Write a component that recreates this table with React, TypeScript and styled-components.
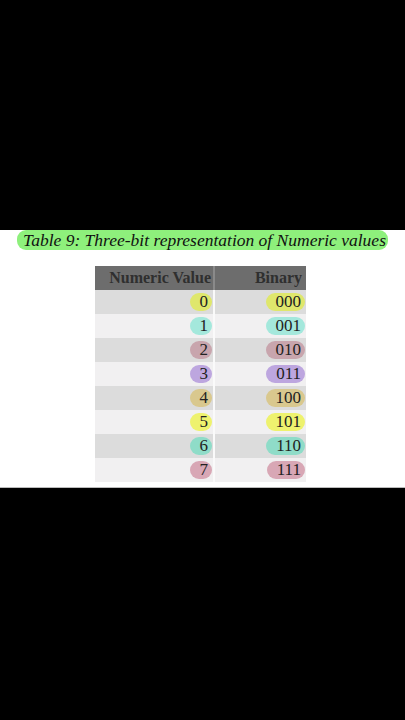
import React from "react"
import styled, { createGlobalStyle } from "styled-components"

const GlobalStyle = createGlobalStyle`
  html, body {
    margin: 0;
    padding: 0;
    background: #000;
  }
  #root {
    width: 405px;
    height: 720px;
  }
`

interface Row {
  value: string
  binary: string
  color: string
}

const rows: Row[] = [
  { value: "0", binary: "000", color: "#dfe76c" },
  { value: "1", binary: "001", color: "#a4e8dc" },
  { value: "2", binary: "010", color: "#c8a5ad" },
  { value: "3", binary: "011", color: "#bda6df" },
  { value: "4", binary: "100", color: "#d9c88e" },
  { value: "5", binary: "101", color: "#eef26e" },
  { value: "6", binary: "110", color: "#8fdcc8" },
  { value: "7", binary: "111", color: "#d8a7b5" },
]

export default function App() {
  return (
    <>
      <GlobalStyle />
      <Screen>
        <Slide>
          <Caption>
            <Mark>Table 9: Three-bit representation of Numeric values</Mark>
          </Caption>
          <Table>
            <colgroup>
              <col style={{ width: 119 }} />
              <col style={{ width: 92 }} />
            </colgroup>
            <thead>
              <tr>
                <HeadCell>Numeric Value</HeadCell>
                <HeadCell>Binary</HeadCell>
              </tr>
            </thead>
            <tbody>
              {rows.map((r, i) => (
                <BodyRow key={r.value} $odd={i % 2 === 1}>
                  <Cell>
                    <Pill $color={r.color}>{r.value}</Pill>
                  </Cell>
                  <Cell>
                    <Pill $color={r.color}>{r.binary}</Pill>
                  </Cell>
                </BodyRow>
              ))}
            </tbody>
          </Table>
        </Slide>
      </Screen>
    </>
  )
}

const Screen = styled.div`
  width: 405px;
  height: 720px;
  background: #000;
  display: flex;
  flex-direction: column;
  justify-content: center;
  padding-bottom: 2px;
  box-sizing: border-box;
`

const Slide = styled.div`
  height: 258px;
  background: #fff;
  display: flex;
  flex-direction: column;
  align-items: center;
  padding-top: 1px;
  box-sizing: border-box;
  border-bottom: 1px solid #bbb;
`

const Caption = styled.div`
  font-family: "Liberation Serif", "Times New Roman", serif;
  font-style: italic;
  font-size: 17.5px;
  color: #111;
  line-height: 18px;
  white-space: nowrap;
`

const Mark = styled.span`
  background: #8ef07c;
  border-radius: 9px;
  padding: 0 2px 0 6px;
`

const Table = styled.table`
  margin-top: 17px;
  margin-right: 4px;
  border-collapse: collapse;
  table-layout: fixed;
  width: 211px;
  font-family: "Liberation Serif", "Times New Roman", serif;
`

const HeadCell = styled.th`
  background: #6d6d6d;
  color: #2f2f2f;
  font-size: 16px;
  font-weight: bold;
  height: 24px;
  padding: 0 4px 0 0;
  text-align: right;
  white-space: nowrap;
  &:first-child {
    padding-right: 2px;
    border-right: 2px solid #8a8a8a;
  }
`

const BodyRow = styled.tr<{ $odd: boolean }>`
  background: ${(p) => (p.$odd ? "#f1f0f1" : "#dcdcdc")};
`

const Cell = styled.td`
  height: 24px;
  padding: 0 1px 0 0;
  text-align: right;
  font-size: 17px;
  color: #222;
  &:first-child {
    border-right: 2px solid #fafafa;
  }
`

const Pill = styled.span<{ $color: string }>`
  display: inline-block;
  background: ${(p) => p.$color};
  border-radius: 9px;
  padding: 0 4px 0 10px;
  line-height: 18px;
`
